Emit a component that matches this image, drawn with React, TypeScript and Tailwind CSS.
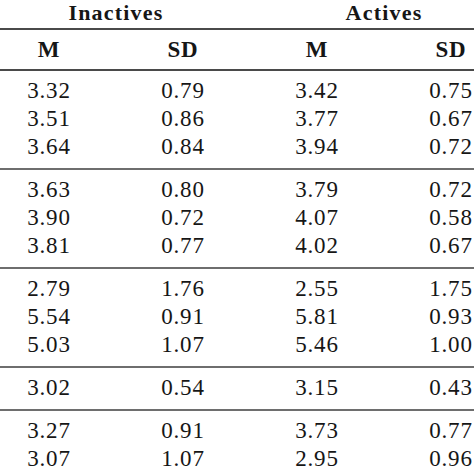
import React from "react";

type Row = [string, string, string, string];

const groups: Row[][] = [
  [
    ["3.32", "0.79", "3.42", "0.75"],
    ["3.51", "0.86", "3.77", "0.67"],
    ["3.64", "0.84", "3.94", "0.72"],
  ],
  [
    ["3.63", "0.80", "3.79", "0.72"],
    ["3.90", "0.72", "4.07", "0.58"],
    ["3.81", "0.77", "4.02", "0.67"],
  ],
  [
    ["2.79", "1.76", "2.55", "1.75"],
    ["5.54", "0.91", "5.81", "0.93"],
    ["5.03", "1.07", "5.46", "1.00"],
  ],
  [["3.02", "0.54", "3.15", "0.43"]],
  [
    ["3.27", "0.91", "3.73", "0.77"],
    ["3.07", "1.07", "2.95", "0.96"],
  ],
];

export default function App() {
  return (
    <div
      className="w-[474px] h-[474px] overflow-hidden bg-white text-[#161616]"
      style={{ fontFamily: '"Liberation Serif", "Times New Roman", serif' }}
    >
      <div className="w-[536px] ml-[-18px]">
        {/* Group header */}
        <div className="grid grid-cols-[268px_268px] h-[30px] border-b-2 border-[#4a4a4a] text-[22px] leading-[25px] font-bold tracking-[1.2px]">
          <div className="text-center">Inactives</div>
          <div className="text-center">Actives</div>
        </div>

        {/* Column header */}
        <div className="grid grid-cols-[134px_134px_134px_134px] pt-[6px] pb-[5px] border-b-2 border-[#4a4a4a] text-[23px] leading-[28px] font-bold tracking-[0.8px]">
          <div className="text-center">M</div>
          <div className="text-center">SD</div>
          <div className="text-center">M</div>
          <div className="text-center">SD</div>
        </div>

        {/* Values */}
        {groups.map((rows, g) => (
          <div
            key={g}
            className={
              g < groups.length - 1
                ? "pt-[6px] pb-[7px] border-b-2 border-[#6e6e6e]"
                : "pt-[6px] pb-[7px]"
            }
          >
            {rows.map((row, i) => (
              <div
                key={i}
                className="grid grid-cols-[134px_134px_134px_134px] text-[23px] leading-[28px] tracking-[0.8px]"
              >
                {row.map((v, j) => (
                  <div key={j} className="text-center">
                    {v}
                  </div>
                ))}
              </div>
            ))}
          </div>
        ))}
      </div>
    </div>
  );
}
